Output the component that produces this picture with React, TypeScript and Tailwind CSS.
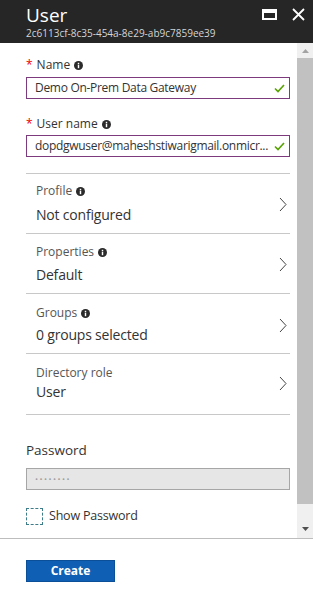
import React from "react";

function InfoIcon() {
  return (
    <svg width="9" height="9" viewBox="0 0 10 10" className="inline-block ml-[4px] mb-[1px]">
      <circle cx="5" cy="5" r="5" fill="#2b2b2b" />
      <rect x="4.2" y="4.2" width="1.6" height="3.8" fill="#fff" />
      <rect x="4.2" y="2" width="1.6" height="1.6" fill="#fff" />
    </svg>
  );
}

function Check() {
  return (
    <svg width="11" height="9" viewBox="0 0 11 9" className="shrink-0">
      <path d="M1 4.5 L4 7.5 L10 1" fill="none" stroke="#57a300" strokeWidth="1.6" />
    </svg>
  );
}

function Chevron() {
  return (
    <svg width="8" height="15" viewBox="0 0 8 15" className="shrink-0">
      <path d="M1 1 L7 7.5 L1 14" fill="none" stroke="#444" strokeWidth="1" />
    </svg>
  );
}

const rows = [
  { label: "Profile", value: "Not configured", info: true, cls: "pt-[9px] pb-[8px]", gap: "mt-[6px]" },
  { label: "Properties", value: "Default", info: true, cls: "pt-[10px] pb-[8px]", gap: "mt-[5px]" },
  { label: "Groups", value: "0 groups selected", info: true, cls: "pt-[11px] pb-[8px]", gap: "mt-[4px]" },
  { label: "Directory role", value: "User", info: false, cls: "pt-[11px] pb-[12px]", gap: "mt-[1px]" },
];

export default function App() {
  return (
    <div className="w-[313px] h-[605px] flex flex-col bg-white text-[#333] font-['Segoe_UI','Open_Sans',sans-serif] overflow-hidden">
      {/* Header */}
      <div className="h-[43px] bg-[#262626] flex justify-between pl-[26px] pr-[8px] shrink-0">
        <div className="pt-[3px]">
          <div className="text-white text-[19px] leading-[24px]">User</div>
          <div className="text-[#d4d4d4] text-[10px] leading-[13px]">2c6113cf-8c35-454a-8e29-ab9c7859ee39</div>
        </div>
        <div className="flex items-start gap-[15px] pt-[8px]">
          <svg width="15" height="11" viewBox="0 0 15 11" className="mt-[1px]">
            <rect x="1" y="1" width="13" height="9" fill="none" stroke="#fff" strokeWidth="2" />
            <rect x="1" y="1" width="13" height="3" fill="#fff" />
          </svg>
          <svg width="13" height="13" viewBox="0 0 13 13">
            <path d="M1 1 L12 12 M12 1 L1 12" stroke="#fff" strokeWidth="1.8" />
          </svg>
        </div>
      </div>

      {/* Body */}
      <div className="flex flex-1 min-h-0">
        <div className="flex-1 min-w-0 pl-[26px] pr-[7px] pt-[14px]">
          <div className="text-[12px] leading-[16px]">
            <span className="text-[#e00] mr-[4px]">*</span>Name
            <InfoIcon />
          </div>
          <div className="mt-[4px] h-[22px] border border-[#7d3a7d] flex items-center justify-between gap-[4px] pl-[8px] pr-[4px] text-[12px] tracking-[-0.3px]">
            <span>Demo On-Prem Data Gateway</span>
            <Check />
          </div>
          <div className="mt-[17px] text-[12px] leading-[16px]">
            <span className="text-[#e00] mr-[4px]">*</span>User name
            <InfoIcon />
          </div>
          <div className="mt-[3px] h-[22px] border border-[#7d3a7d] flex items-center justify-between gap-[4px] pl-[8px] pr-[4px] text-[12px] tracking-[-0.3px]">
            <span className="whitespace-nowrap">dopdgwuser@maheshstiwarigmail.onmicr...</span>
            <Check />
          </div>

          <div className="mt-[16px] border-t border-[#c8c8c8]">
            {rows.map((r) => (
              <div key={r.label} className={`flex items-center justify-between border-b border-[#c8c8c8] pl-[10px] pr-[3px] ${r.cls}`}>
                <div>
                  <div className="text-[12px] leading-[16px] text-[#555]">
                    {r.label}
                    {r.info && <InfoIcon />}
                  </div>
                  <div className={`text-[14px] leading-[20px] tracking-[-0.2px] ${r.gap}`}>{r.value}</div>
                </div>
                <Chevron />
              </div>
            ))}
          </div>

          <div className="mt-[25px] text-[13.5px] leading-[20px]">Password</div>
          <div className="mt-[8px] h-[22px] bg-[#e6e6e6] border border-[#a6a6a6] flex items-center pl-[8px] text-[#a0a0a0] text-[8px] tracking-[1.5px]">
            ••••••••
          </div>
          <div className="mt-[17px] flex items-center gap-[6px]">
            <div className="w-[17px] h-[17px] border border-dashed border-[#3d7d8a]" />
            <span className="text-[12.5px] tracking-[-0.2px]">Show Password</span>
          </div>
        </div>

        {/* Scrollbar */}
        <div className="w-[16px] shrink-0 bg-[#f0f0f0] flex flex-col items-stretch pt-[3px] pb-[4px]">
          <div className="h-[10px] flex justify-center items-center">
            <svg width="7" height="4" viewBox="0 0 7 4"><path d="M0 4 L3.5 0 L7 4 Z" fill="#a3a3a3" /></svg>
          </div>
          <div className="mt-[2px] h-[446px] bg-[#c1c1c1]" />
          <div className="flex-1" />
          <div className="h-[10px] flex justify-center items-center">
            <svg width="7" height="4" viewBox="0 0 7 4"><path d="M0 0 L7 0 L3.5 4 Z" fill="#505050" /></svg>
          </div>
        </div>
      </div>

      {/* Footer */}
      <div className="h-[67px] shrink-0 border-t border-[#bdbdbd] pl-[26px] pt-[21px] flex items-start">
        <button className="w-[89px] h-[22px] bg-[#0f5fb4] border border-[#0b4f99] text-white text-[12px] font-bold leading-none">
          Create
        </button>
      </div>
    </div>
  );
}
